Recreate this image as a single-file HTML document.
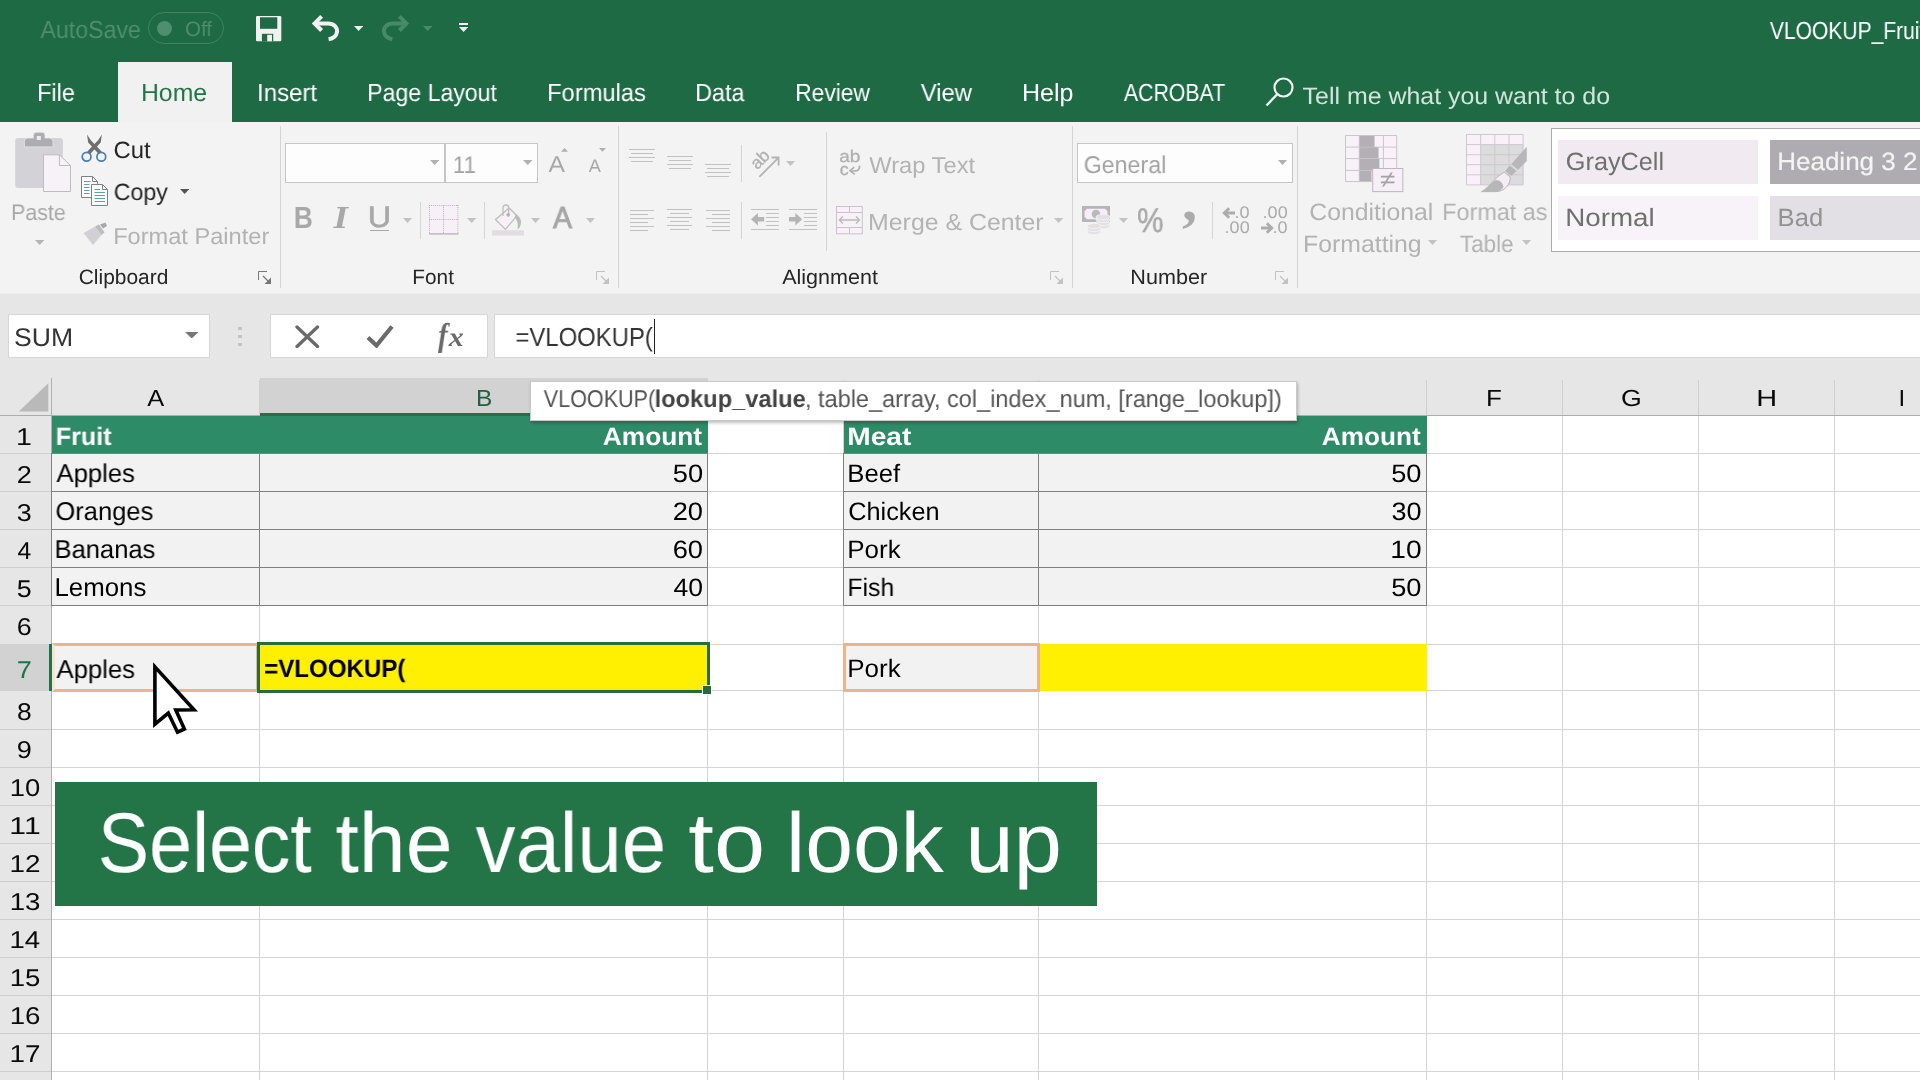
<!DOCTYPE html>
<html lang="en"><head><meta charset="utf-8"><title>VLOOKUP_Fruit - Excel</title>
<style>
html,body{margin:0;padding:0;}
body{width:1920px;height:1080px;overflow:hidden;position:relative;background:#fff;font-family:'Liberation Sans',sans-serif;}
.b{position:absolute;display:block;}
.t{position:absolute;white-space:pre;line-height:1em;transform-origin:0 0;will-change:transform;text-rendering:geometricPrecision;}
</style></head><body>
<div class="b" style="left:0.00px;top:0.00px;width:1920.00px;height:122.00px;background:#1d6a45;"></div>
<div class="b" style="left:0.00px;top:122.00px;width:1920.00px;height:171.00px;background:#f3f3f3;"></div>
<div class="b" style="left:0.00px;top:293.00px;width:1920.00px;height:85.00px;background:#e6e6e6;"></div>
<div class="b" style="left:0.00px;top:293.00px;width:1920.00px;height:1.00px;background:#ededed;"></div>
<header id="titlebar">
<span class="t" style="left:40px;top:19px;font-size:24.75px;color:#4f8e6e;transform:translateX(0.47px) scaleX(0.9350);">AutoSave</span>
<div class="b" style="left:148.00px;top:12.00px;width:76.00px;height:32.00px;border:1.3px solid #3f8461;box-sizing:border-box;border-radius:16px;"></div>
<div class="b" style="left:156.50px;top:20.50px;width:15.00px;height:15.00px;background:#4f8e6e;border-radius:50%;"></div>
<span class="t" style="left:185px;top:20px;font-size:20.75px;color:#4f8e6e;transform:translateX(0.04px) scaleX(0.9839);">Off</span>
<svg class="b" style="left:255.00px;top:15.00px;" width="28.00" height="28.00" viewBox="0 0 28.00 28.00"><rect x="1" y="1" width="25.3" height="25.3" rx="1.2" fill="#f1f1f1"/><rect x="5" y="2.3" width="17.3" height="11.5" fill="#1d6a45"/><rect x="6.9" y="18.8" width="11.3" height="7.5" fill="#1d6a45"/><rect x="12.2" y="19.8" width="4.8" height="6.5" fill="#f1f1f1"/></svg>
<svg class="b" style="left:308.00px;top:11.00px;" width="36.00" height="34.00" viewBox="0 0 36.00 34.00"><path d="M13.6,5.3 L6.6,12.4 L13.6,19.5" fill="none" stroke="#f1f1f1" stroke-width="4"/><path d="M7,12.4 H20 C26,12.4 29.8,16.6 28.9,21.4 C28.2,25.0 25.0,27.6 20.6,28.3" fill="none" stroke="#f1f1f1" stroke-width="4"/></svg>
<svg class="b" style="left:354.00px;top:26.30px;" width="9.20" height="5.00" viewBox="0 0 9.20 5.00"><polygon points="0,0 9.20,0 4.60,5.00" fill="#f1f1f1"/></svg>
<svg class="b" style="left:377.00px;top:11.00px;" width="36.00" height="34.00" viewBox="0 0 36.00 34.00"><path d="M22.4,5.3 L29.4,12.4 L22.4,19.5" fill="none" stroke="#468a67" stroke-width="4"/><path d="M29,12.4 H16 C10,12.4 6.2,16.6 7.1,21.4 C7.8,25.0 11.0,27.6 15.4,28.3" fill="none" stroke="#468a67" stroke-width="4"/></svg>
<svg class="b" style="left:423.00px;top:26.30px;" width="9.20" height="5.00" viewBox="0 0 9.20 5.00"><polygon points="0,0 9.20,0 4.60,5.00" fill="#4b8d6b"/></svg>
<div class="b" style="left:459.00px;top:23.00px;width:9.20px;height:1.80px;background:#f1f1f1;"></div>
<svg class="b" style="left:459.00px;top:27.00px;" width="9.20" height="5.00" viewBox="0 0 9.20 5.00"><polygon points="0,0 9.20,0 4.60,5.00" fill="#f1f1f1"/></svg>
<span class="t" style="left:1769px;top:20px;font-size:24.75px;color:#fff;transform:translateX(0.86px) scaleX(0.8499);">VLOOKUP_Fruit</span>
</header>
<nav id="ribbon-tabs">
<div class="b" style="left:118.00px;top:62.00px;width:114.00px;height:61.00px;background:#f1f1f1;"></div>
<span class="t" style="left:37px;top:82px;font-size:24.75px;color:#fff;transform:translateX(0.16px) scaleX(0.9496);">File</span>
<span class="t" style="left:141px;top:82px;font-size:24.75px;color:#217346;transform:translateX(0.07px) scaleX(0.9987);">Home</span>
<span class="t" style="left:256px;top:82px;font-size:24.75px;color:#fff;transform:translateX(1.00px) scaleX(0.9702);">Insert</span>
<span class="t" style="left:367px;top:82px;font-size:24.75px;color:#fff;transform:translateX(0.19px) scaleX(0.9339);">Page Layout</span>
<span class="t" style="left:547px;top:82px;font-size:24.75px;color:#fff;transform:translateX(0.15px) scaleX(0.9567);">Formulas</span>
<span class="t" style="left:695px;top:82px;font-size:24.75px;color:#fff;transform:translateX(0.18px) scaleX(0.9423);">Data</span>
<span class="t" style="left:795px;top:82px;font-size:24.75px;color:#fff;transform:translateX(0.22px) scaleX(0.9205);">Review</span>
<span class="t" style="left:920px;top:82px;font-size:24.75px;color:#fff;transform:translateX(0.83px) scaleX(0.9615);">View</span>
<span class="t" style="left:1022px;top:82px;font-size:24.75px;color:#fff;transform:translateX(0.04px) scaleX(1.0113);">Help</span>
<span class="t" style="left:1123px;top:82px;font-size:24.75px;color:#fff;transform:translateX(0.89px) scaleX(0.8595);">ACROBAT</span>
<svg class="b" style="left:1264.00px;top:76.00px;" width="33.00" height="32.00" viewBox="0 0 33.00 32.00"><circle cx="19.5" cy="11.5" r="9" fill="none" stroke="#eef5f1" stroke-width="2.2"/><path d="M13,18.5 L2.5,29.5" stroke="#eef5f1" stroke-width="2.4"/></svg>
<span class="t" style="left:1302px;top:85px;font-size:23.75px;color:#d3e5db;transform:translateX(0.61px) scaleX(1.0489);">Tell me what you want to do</span>
</nav>
<section id="ribbon">
<div class="b" style="left:280.00px;top:126.00px;width:1.00px;height:162.00px;background:#d4d4d4;"></div>
<div class="b" style="left:618.00px;top:126.00px;width:1.00px;height:162.00px;background:#d4d4d4;"></div>
<div class="b" style="left:1072.00px;top:126.00px;width:1.00px;height:162.00px;background:#d4d4d4;"></div>
<div class="b" style="left:1297.00px;top:126.00px;width:1.00px;height:162.00px;background:#d4d4d4;"></div>
<span class="t" style="left:78px;top:268px;font-size:20.75px;color:#262626;transform:translateX(0.75px) scaleX(1.0086);">Clipboard</span>
<span class="t" style="left:412px;top:268px;font-size:20.75px;color:#262626;transform:translateX(0.37px) scaleX(1.0010);">Font</span>
<span class="t" style="left:782px;top:268px;font-size:20.75px;color:#262626;transform:translateX(0.19px) scaleX(1.0376);">Alignment</span>
<span class="t" style="left:1130px;top:268px;font-size:20.75px;color:#262626;transform:translateX(0.31px) scaleX(1.0405);">Number</span>
<svg class="b" style="left:257.50px;top:271.00px;" width="13.50" height="13.50" viewBox="0 0 13.50 13.50"><path d="M0.5,9V0.5H9" fill="none" stroke="#777" stroke-width="1"/><path d="M5,5L11,11" stroke="#777" stroke-width="1.3"/><polygon points="13,6.5 13,13 6.5,13" fill="#777"/></svg>
<svg class="b" style="left:596.00px;top:271.00px;" width="13.50" height="13.50" viewBox="0 0 13.50 13.50"><path d="M0.5,9V0.5H9" fill="none" stroke="#c2c2c2" stroke-width="1"/><path d="M5,5L11,11" stroke="#c2c2c2" stroke-width="1.3"/><polygon points="13,6.5 13,13 6.5,13" fill="#c2c2c2"/></svg>
<svg class="b" style="left:1050.00px;top:271.00px;" width="13.50" height="13.50" viewBox="0 0 13.50 13.50"><path d="M0.5,9V0.5H9" fill="none" stroke="#c2c2c2" stroke-width="1"/><path d="M5,5L11,11" stroke="#c2c2c2" stroke-width="1.3"/><polygon points="13,6.5 13,13 6.5,13" fill="#c2c2c2"/></svg>
<svg class="b" style="left:1275.00px;top:271.00px;" width="13.50" height="13.50" viewBox="0 0 13.50 13.50"><path d="M0.5,9V0.5H9" fill="none" stroke="#c2c2c2" stroke-width="1"/><path d="M5,5L11,11" stroke="#c2c2c2" stroke-width="1.3"/><polygon points="13,6.5 13,13 6.5,13" fill="#c2c2c2"/></svg>
<svg class="b" style="left:14.00px;top:131.00px;" width="59.00" height="63.00" viewBox="0 0 59.00 63.00"><rect x="1.2" y="7.1" width="47.7" height="50" rx="3" fill="#d3d2d6"/><path d="M10.4,15.9 V10.5 A3.5,3.5 0 0 1 13.9,7 H19.4 V4.2 A3,3 0 0 1 22.4,1.2 H28 A3,3 0 0 1 31,4.2 V7 H35.5 A3.5,3.5 0 0 1 39,10.5 V15.9 Z" fill="#adacb0" stroke="#e9e8eb" stroke-width="0.8"/><rect x="22.8" y="5" width="4.1" height="4" fill="#eceaee"/><path d="M29.5,23.8 H45.4 L56.5,34.5 V60.5 H29.5 Z" fill="#f7f1f8" stroke="#bdbbbf" stroke-width="1"/><path d="M45.4,23.8 V34.5 H56.5" fill="none" stroke="#bdbbbf" stroke-width="1"/></svg>
<span class="t" style="left:11px;top:202px;font-size:22.50px;color:#a8a8a8;transform:translateX(0.09px) scaleX(0.9495);">Paste</span>
<svg class="b" style="left:34.70px;top:239.70px;" width="9.30" height="5.00" viewBox="0 0 9.30 5.00"><polygon points="0,0 9.30,0 4.65,5.00" fill="#b4b4b4"/></svg>
<svg class="b" style="left:80.00px;top:133.00px;" width="29.00" height="31.00" viewBox="0 0 29.00 31.00"><polygon points="7.0,1.6 10.8,7.2 21.6,18.6 18.9,21.3 8.2,9.6" fill="#6f6f6f"/><polygon points="21.9,1.6 18.1,7.2 7.3,18.6 10.0,21.3 20.7,9.6" fill="#6f6f6f"/><circle cx="6.6" cy="23.8" r="4.4" fill="none" stroke="#4a7eb3" stroke-width="1.7"/><circle cx="21.3" cy="23.8" r="4.4" fill="none" stroke="#4a7eb3" stroke-width="1.7"/></svg>
<span class="t" style="left:113px;top:139px;font-size:23.50px;color:#262626;transform:translateX(0.58px) scaleX(1.0155);">Cut</span>
<svg class="b" style="left:81.00px;top:176.00px;" width="28.00" height="31.00" viewBox="0 0 28.00 31.00"><g fill="#fff" stroke="#808080" stroke-width="1"><path d="M0.5,0.5H11.5L16.5,5.5V21.5H0.5Z"/><path d="M11.5,0.5V5.5H16.5" fill="none"/><path d="M10.5,8.5H21.5L26.5,13.5V29.5H10.5Z"/><path d="M21.5,8.5V13.5H26.5" fill="none"/></g><g stroke="#4d93a6" stroke-width="0.9"><path d="M3,5.5H9.5M3,8.5H8.5M3,11.5H8.5M3,14.5H8.5M3,17.5H8.5"/><path d="M13.5,13.5H19M13.5,16.5H24M13.5,19.5H24M13.5,22.5H24M13.5,25.5H24"/></g></svg>
<span class="t" style="left:113px;top:181px;font-size:23.50px;color:#262626;transform:translateX(0.64px) scaleX(0.9895);">Copy</span>
<svg class="b" style="left:179.70px;top:189.00px;" width="9.30" height="5.00" viewBox="0 0 9.30 5.00"><polygon points="0,0 9.30,0 4.65,5.00" fill="#555"/></svg>
<svg class="b" style="left:83.00px;top:222.00px;" width="25.00" height="24.00" viewBox="0 0 25.00 24.00"><path d="M0.5,11 L12,4.5 L18.5,13 L10,23 Z" fill="#d2d0d4"/><path d="M12,4.5 L16,2.5 L21.5,10.5 L18.5,13Z" fill="#bcbcbc"/><path d="M17,2.5 L22.5,0.5 L24,4 L20,6.5Z" fill="#a9a9a9"/></svg>
<span class="t" style="left:113px;top:225px;font-size:23.00px;color:#b2b2b2;transform:translateX(0.16px) scaleX(1.0261);">Format Painter</span>
<div class="b" style="left:285.00px;top:143.00px;width:160.00px;height:40.00px;background:#fdfdfd;border:1px solid #c6c6c6;box-sizing:border-box;"></div>
<div class="b" style="left:445.00px;top:143.00px;width:93.00px;height:40.00px;background:#fdfdfd;border:1px solid #c6c6c6;box-sizing:border-box;"></div>
<svg class="b" style="left:429.70px;top:160.00px;" width="9.30" height="5.00" viewBox="0 0 9.30 5.00"><polygon points="0,0 9.30,0 4.65,5.00" fill="#b0b0b0"/></svg>
<svg class="b" style="left:522.50px;top:160.00px;" width="9.50" height="5.00" viewBox="0 0 9.50 5.00"><polygon points="0,0 9.50,0 4.75,5.00" fill="#b0b0b0"/></svg>
<span class="t" style="left:452px;top:154px;font-size:24.00px;color:#a2a2a2;transform:translateX(0.83px) scaleX(0.9302);">11</span>
<span class="t" style="left:548px;top:153px;font-size:23.00px;color:#a8a8a8;transform:translateX(0.42px) scaleX(1.0746);">A</span>
<svg class="b" style="left:561.00px;top:148.00px;" width="7.00" height="3.70" viewBox="0 0 7.00 3.70"><polygon points="0,3.70 7.00,3.70 3.50,0" fill="#b0b0b0"/></svg>
<span class="t" style="left:588px;top:157px;font-size:18.00px;color:#a8a8a8;transform:translateX(0.86px) scaleX(1.0119);">A</span>
<svg class="b" style="left:599.00px;top:148.00px;" width="7.00" height="3.70" viewBox="0 0 7.00 3.70"><polygon points="0,0 7.00,0 3.50,3.70" fill="#b0b0b0"/></svg>
<span class="t" style="left:293px;top:203px;font-size:30.50px;color:#a8a8a8;font-weight:700;transform:translateX(0.78px) scaleX(0.8637);">B</span>
<span class="t" style="left:333px;top:201px;font-size:32.00px;color:#a8a8a8;font-weight:700;font-style:italic;font-family:'Liberation Serif', serif;transform:translateX(0.44px) scaleX(1.1653);">I</span>
<span class="t" style="left:367px;top:203px;font-size:29.75px;color:#a8a8a8;transform:translateX(0.70px) scaleX(1.0901);-webkit-text-stroke:0.6px #a8a8a8;">U</span>
<div class="b" style="left:370.00px;top:229.60px;width:19.00px;height:1.40px;background:#a8a8a8;"></div>
<svg class="b" style="left:403.00px;top:218.00px;" width="9.00" height="5.00" viewBox="0 0 9.00 5.00"><polygon points="0,0 9.00,0 4.50,5.00" fill="#c2c2c2"/></svg>
<div class="b" style="left:420.00px;top:202.00px;width:1.00px;height:36.70px;background:#d4d4d4;"></div>
<svg class="b" style="left:429.00px;top:205.00px;" width="30.00" height="30.00" viewBox="0 0 30.00 30.00"><rect x="0.5" y="0.5" width="28.5" height="28.5" fill="#f7f0f7"/><path d="M0,0.5H29.5M0,14.5H29.5" stroke="#bdadbe" stroke-width="1" stroke-dasharray="1 1.07" fill="none"/><path d="M0.5,0V29M14.5,0V29M28.9,0V29" stroke="#bdadbe" stroke-width="1" stroke-dasharray="1 1.07" fill="none"/><path d="M0,28.9H29.5" stroke="#b7afb9" stroke-width="1.3"/></svg>
<svg class="b" style="left:466.70px;top:218.00px;" width="9.30" height="5.00" viewBox="0 0 9.30 5.00"><polygon points="0,0 9.30,0 4.65,5.00" fill="#c2c2c2"/></svg>
<div class="b" style="left:484.00px;top:202.00px;width:1.00px;height:36.70px;background:#d4d4d4;"></div>
<svg class="b" style="left:492.00px;top:203.00px;" width="33.00" height="33.00" viewBox="0 0 33.00 33.00"><path d="M3.5,16.5 L17.1,5.0 L24.9,12.8 L13.4,26.4 Z" fill="#f7f0f7" stroke="#bdbdbd" stroke-width="1.3" stroke-linejoin="round"/><path d="M11,13 V4.8 A2.8,2.8 0 0 1 16.6,4.8 V11" fill="none" stroke="#bdbdbd" stroke-width="1.3"/><circle cx="16.2" cy="11.8" r="1.9" fill="#b3b3b3"/><path d="M23.8,11.2 C28,13 30,18 28.6,22 C28,24 27,25.6 25.6,26.6 C26.2,21 25.6,17.5 22.6,14.2 Z" fill="#bbbbbb"/><rect x="0" y="27.2" width="32" height="5.4" fill="#e1dee3"/></svg>
<svg class="b" style="left:531.00px;top:218.00px;" width="9.00" height="5.00" viewBox="0 0 9.00 5.00"><polygon points="0,0 9.00,0 4.50,5.00" fill="#c2c2c2"/></svg>
<span class="t" style="left:552px;top:203px;font-size:30.50px;color:#a6a6a6;transform:translateX(0.99px) scaleX(0.9365);-webkit-text-stroke:0.9px #a6a6a6;">A</span>
<svg class="b" style="left:586.00px;top:218.00px;" width="9.00" height="5.00" viewBox="0 0 9.00 5.00"><polygon points="0,0 9.00,0 4.50,5.00" fill="#c2c2c2"/></svg>
<div class="b" style="left:629.00px;top:149.00px;width:26.00px;height:1.00px;background:#c2c2c2;"></div><div class="b" style="left:631.00px;top:153.00px;width:22.00px;height:1.00px;background:#c2c2c2;"></div><div class="b" style="left:629.00px;top:157.00px;width:26.00px;height:1.00px;background:#c2c2c2;"></div><div class="b" style="left:631.00px;top:161.00px;width:22.00px;height:1.00px;background:#c2c2c2;"></div>
<div class="b" style="left:667.00px;top:156.00px;width:26.00px;height:1.00px;background:#c2c2c2;"></div><div class="b" style="left:669.00px;top:160.00px;width:22.00px;height:1.00px;background:#c2c2c2;"></div><div class="b" style="left:667.00px;top:164.00px;width:26.00px;height:1.00px;background:#c2c2c2;"></div><div class="b" style="left:669.00px;top:168.00px;width:22.00px;height:1.00px;background:#c2c2c2;"></div>
<div class="b" style="left:705.00px;top:164.00px;width:26.00px;height:1.00px;background:#c2c2c2;"></div><div class="b" style="left:707.00px;top:168.00px;width:22.00px;height:1.00px;background:#c2c2c2;"></div><div class="b" style="left:705.00px;top:172.00px;width:26.00px;height:1.00px;background:#c2c2c2;"></div><div class="b" style="left:707.00px;top:176.00px;width:22.00px;height:1.00px;background:#c2c2c2;"></div>
<div class="b" style="left:741.00px;top:145.00px;width:1.00px;height:36.70px;background:#d4d4d4;"></div>
<div class="b" style="left:630.00px;top:210.00px;width:24.00px;height:1.00px;background:#c2c2c2;"></div><div class="b" style="left:630.00px;top:214.00px;width:18.00px;height:1.00px;background:#c2c2c2;"></div><div class="b" style="left:630.00px;top:218.00px;width:24.00px;height:1.00px;background:#c2c2c2;"></div><div class="b" style="left:630.00px;top:222.00px;width:18.00px;height:1.00px;background:#c2c2c2;"></div><div class="b" style="left:630.00px;top:226.00px;width:24.00px;height:1.00px;background:#c2c2c2;"></div><div class="b" style="left:630.00px;top:230.00px;width:18.00px;height:1.00px;background:#c2c2c2;"></div>
<div class="b" style="left:667.00px;top:209.00px;width:25.00px;height:1.00px;background:#c2c2c2;"></div><div class="b" style="left:670.00px;top:213.00px;width:19.00px;height:1.00px;background:#c2c2c2;"></div><div class="b" style="left:667.00px;top:217.00px;width:25.00px;height:1.00px;background:#c2c2c2;"></div><div class="b" style="left:670.00px;top:221.00px;width:19.00px;height:1.00px;background:#c2c2c2;"></div><div class="b" style="left:667.00px;top:225.00px;width:25.00px;height:1.00px;background:#c2c2c2;"></div><div class="b" style="left:670.00px;top:229.00px;width:19.00px;height:1.00px;background:#c2c2c2;"></div>
<div class="b" style="left:706.00px;top:210.00px;width:24.00px;height:1.00px;background:#c2c2c2;"></div><div class="b" style="left:712.00px;top:214.00px;width:18.00px;height:1.00px;background:#c2c2c2;"></div><div class="b" style="left:706.00px;top:218.00px;width:24.00px;height:1.00px;background:#c2c2c2;"></div><div class="b" style="left:712.00px;top:222.00px;width:18.00px;height:1.00px;background:#c2c2c2;"></div><div class="b" style="left:706.00px;top:226.00px;width:24.00px;height:1.00px;background:#c2c2c2;"></div><div class="b" style="left:712.00px;top:230.00px;width:18.00px;height:1.00px;background:#c2c2c2;"></div>
<div class="b" style="left:741.00px;top:202.00px;width:1.00px;height:36.70px;background:#d4d4d4;"></div>
<svg class="b" style="left:750.00px;top:148.00px;" width="32.00" height="32.00" viewBox="0 0 32.00 32.00"><path d="M9.3,28.8 L28.3,9.8 M21.5,9.5 H28.6 V17.5" fill="none" stroke="#b3b3b3" stroke-width="1.8"/><text x="0" y="0" transform="translate(7.2,22.3) rotate(-45)" font-family="Liberation Sans, sans-serif" font-size="17.5" fill="#b0b0b0" stroke="#b0b0b0" stroke-width="0.3">ab</text></svg>
<svg class="b" style="left:786.00px;top:161.00px;" width="9.00" height="5.00" viewBox="0 0 9.00 5.00"><polygon points="0,0 9.00,0 4.50,5.00" fill="#c2c2c2"/></svg>
<div class="b" style="left:751.00px;top:209.00px;width:28.00px;height:1.00px;background:#c2c2c2;"></div><div class="b" style="left:751.00px;top:229.00px;width:28.00px;height:1.00px;background:#c2c2c2;"></div><div class="b" style="left:766.00px;top:213.00px;width:13.00px;height:1.00px;background:#c2c2c2;"></div><div class="b" style="left:766.00px;top:217.00px;width:13.00px;height:1.00px;background:#c2c2c2;"></div><div class="b" style="left:766.00px;top:221.00px;width:13.00px;height:1.00px;background:#c2c2c2;"></div><div class="b" style="left:766.00px;top:225.00px;width:13.00px;height:1.00px;background:#c2c2c2;"></div><svg class="b" style="left:751.00px;top:212.00px;" width="14.00" height="15.00" viewBox="0 0 14.00 15.00"><path d="M13.2,5H6.9V1L0,7.3L6.9,13.6V9.6H13.2Z" fill="#b5b5b5"/></svg>
<div class="b" style="left:789.00px;top:209.00px;width:28.00px;height:1.00px;background:#c2c2c2;"></div><div class="b" style="left:789.00px;top:229.00px;width:28.00px;height:1.00px;background:#c2c2c2;"></div><div class="b" style="left:804.00px;top:213.00px;width:13.00px;height:1.00px;background:#c2c2c2;"></div><div class="b" style="left:804.00px;top:217.00px;width:13.00px;height:1.00px;background:#c2c2c2;"></div><div class="b" style="left:804.00px;top:221.00px;width:13.00px;height:1.00px;background:#c2c2c2;"></div><div class="b" style="left:804.00px;top:225.00px;width:13.00px;height:1.00px;background:#c2c2c2;"></div><svg class="b" style="left:789.00px;top:212.00px;" width="14.00" height="15.00" viewBox="0 0 14.00 15.00"><path d="M0,5H6.3V1L13.2,7.3L6.3,13.6V9.6H0Z" fill="#b5b5b5"/></svg>
<div class="b" style="left:826.00px;top:132.00px;width:1.00px;height:119.00px;background:#d4d4d4;"></div>
<span class="t" style="left:839px;top:148px;font-size:17.00px;color:#b0b0b0;transform:translateX(0.25px) scaleX(1.1222);-webkit-text-stroke:0.3px #b0b0b0;">ab</span>
<span class="t" style="left:839px;top:161px;font-size:17.00px;color:#b0b0b0;transform:translateX(0.84px) scaleX(1.0484);-webkit-text-stroke:0.3px #b0b0b0;">c</span>
<svg class="b" style="left:848.00px;top:163.00px;" width="14.00" height="14.00" viewBox="0 0 14.00 14.00"><path d="M11.5,2.5 C12,8 8.5,8.3 2.5,7.8 M6.3,4.2 L2,7.8 L6.8,11.3" fill="none" stroke="#b0b0b0" stroke-width="1.6"/></svg>
<span class="t" style="left:869px;top:154px;font-size:23.00px;color:#b3b3b3;transform:translateX(0.25px) scaleX(1.0304);">Wrap Text</span>
<svg class="b" style="left:836.00px;top:206.00px;" width="27.50" height="28.50" viewBox="0 0 27.50 28.50"><rect x="0.5" y="0.5" width="25.8" height="27.3" fill="#f8f1f8" stroke="#c9c2ca"/><path d="M0.5,6.5H26.3M0.5,21.5H26.3M13.5,0.5V6.5M13.5,21.5V27.8" stroke="#c9c2ca" fill="none"/><path d="M3.3,14H23.5M6.8,10.5L3.3,14L6.8,17.5M20,10.5L23.5,14L20,17.5" stroke="#b9b9b9" stroke-width="1.3" fill="none"/></svg>
<span class="t" style="left:868px;top:211px;font-size:23.25px;color:#b3b3b3;transform:translateX(0.06px) scaleX(1.0694);">Merge &amp; Center</span>
<svg class="b" style="left:1053.80px;top:218.00px;" width="9.20" height="5.00" viewBox="0 0 9.20 5.00"><polygon points="0,0 9.20,0 4.60,5.00" fill="#c2c2c2"/></svg>
<div class="b" style="left:1077.00px;top:143.00px;width:216.00px;height:40.00px;background:#fdfdfd;border:1px solid #c6c6c6;box-sizing:border-box;"></div>
<span class="t" style="left:1083px;top:154px;font-size:24.25px;color:#a2a2a2;transform:translateX(0.69px) scaleX(0.9572);">General</span>
<svg class="b" style="left:1278.00px;top:160.00px;" width="9.00" height="5.00" viewBox="0 0 9.00 5.00"><polygon points="0,0 9.00,0 4.50,5.00" fill="#b0b0b0"/></svg>
<svg class="b" style="left:1082.00px;top:206.00px;" width="29.00" height="29.00" viewBox="0 0 29.00 29.00"><rect x="0" y="0" width="28" height="16" fill="#b5b4b7"/><path d="M4.5,2.8 H23.5 A2,2 0 0 0 25.5,4.8 V11.2 A2,2 0 0 0 23.5,13.2 H4.5 A2,2 0 0 0 2.5,11.2 V4.8 A2,2 0 0 0 4.5,2.8Z" fill="#f6eef7"/><circle cx="14" cy="8" r="4.3" fill="#b9b9b9"/><g fill="#e4e1e6" stroke="#f3f3f3" stroke-width="0.8"><ellipse cx="21" cy="20" rx="7" ry="2.6"/><ellipse cx="21" cy="17" rx="7" ry="2.6"/><ellipse cx="21" cy="14" rx="7" ry="2.6"/><ellipse cx="21" cy="11" rx="7" ry="2.6"/><ellipse cx="12" cy="26" rx="7" ry="2.6"/><ellipse cx="12" cy="23" rx="7" ry="2.6"/><ellipse cx="12" cy="20" rx="7" ry="2.6"/></g></svg>
<svg class="b" style="left:1119.00px;top:218.00px;" width="9.00" height="5.00" viewBox="0 0 9.00 5.00"><polygon points="0,0 9.00,0 4.50,5.00" fill="#c2c2c2"/></svg>
<span class="t" style="left:1137px;top:204px;font-size:34.25px;color:#a9a9a9;transform:translateX(0.10px) scaleX(0.8647);-webkit-text-stroke:0.6px #a9a9a9;">%</span>
<span class="t" style="left:1181px;top:172px;font-size:58.00px;color:#ababab;font-weight:700;font-family:'Liberation Serif', serif;transform:translateX(0.98px) scaleX(1.0396);">,</span>
<div class="b" style="left:1212.00px;top:202.00px;width:1.00px;height:36.70px;background:#d4d4d4;"></div>
<span class="t" style="left:1234px;top:205px;font-size:16.75px;color:#ababab;transform:translateX(0.59px) scaleX(1.0800);">.0</span>
<span class="t" style="left:1224px;top:220px;font-size:16.75px;color:#ababab;transform:translateX(0.59px) scaleX(1.0769);">.00</span>
<svg class="b" style="left:1222.00px;top:207.00px;" width="14.00" height="12.00" viewBox="0 0 14.00 12.00"><path d="M13,6H3M7.2,1.2L2.2,6L7.2,10.8" fill="none" stroke="#acacac" stroke-width="2.8"/></svg>
<span class="t" style="left:1262px;top:205px;font-size:16.75px;color:#ababab;transform:translateX(0.59px) scaleX(1.0769);">.00</span>
<span class="t" style="left:1272px;top:220px;font-size:16.75px;color:#ababab;transform:translateX(0.59px) scaleX(1.0800);">.0</span>
<svg class="b" style="left:1260.00px;top:222.00px;" width="14.00" height="12.00" viewBox="0 0 14.00 12.00"><path d="M1,6H11M6.8,1.2L11.8,6L6.8,10.8" fill="none" stroke="#acacac" stroke-width="2.8"/></svg>
<svg class="b" style="left:1345.00px;top:135.00px;" width="59.00" height="57.50" viewBox="0 0 59.00 57.50"><rect x="0.5" y="0.5" width="51.2" height="46.1" fill="#f8f1f8"/><rect x="14.3" y="0.5" width="15.0" height="11.6" fill="#b2b0b4"/><rect x="14.3" y="12.1" width="19.0" height="11.5" fill="#b2b0b4"/><rect x="14.3" y="23.6" width="19.9" height="11.8" fill="#b2b0b4"/><rect x="14.3" y="35.4" width="12.0" height="11.2" fill="#b2b0b4"/><path d="M0.5,0.5V46.6" stroke="#cbc4cd" stroke-width="1"/><path d="M14.3,0.5V46.6" stroke="#cbc4cd" stroke-width="1"/><path d="M38.4,0.5V46.6" stroke="#cbc4cd" stroke-width="1"/><path d="M51.7,0.5V46.6" stroke="#cbc4cd" stroke-width="1"/><path d="M0.5,0.5H51.7" stroke="#cbc4cd" stroke-width="1"/><path d="M0.5,12.1H51.7" stroke="#cbc4cd" stroke-width="1"/><path d="M0.5,23.6H51.7" stroke="#cbc4cd" stroke-width="1"/><path d="M0.5,35.4H51.7" stroke="#cbc4cd" stroke-width="1"/><path d="M0.5,46.6H51.7" stroke="#cbc4cd" stroke-width="1"/><rect x="14.8" y="1.1" width="14.5" height="10.4" fill="#b2b0b4"/><rect x="14.8" y="12.7" width="18.5" height="10.3" fill="#b2b0b4"/><rect x="14.8" y="24.2" width="19.4" height="10.6" fill="#b2b0b4"/><rect x="14.8" y="36.0" width="11.5" height="10.0" fill="#b2b0b4"/><rect x="27.7" y="33.5" width="30.2" height="23.1" fill="#f6eff7" stroke="#bbb9bd" stroke-width="1"/></svg>
<span class="t" style="left:1380px;top:168px;font-size:23.00px;color:#a3a3a3;transform:translateX(0.10px) scaleX(1.2143);">≠</span>
<span class="t" style="left:1309px;top:201px;font-size:23.75px;color:#b2b2b2;transform:translateX(0.34px) scaleX(1.0425);">Conditional</span>
<span class="t" style="left:1303px;top:233px;font-size:23.75px;color:#b2b2b2;transform:translateX(0.06px) scaleX(1.0447);">Formatting</span>
<svg class="b" style="left:1428.00px;top:239.50px;" width="9.00" height="5.00" viewBox="0 0 9.00 5.00"><polygon points="0,0 9.00,0 4.50,5.00" fill="#c2c2c2"/></svg>
<svg class="b" style="left:1466.00px;top:134.00px;" width="62.00" height="58.50" viewBox="0 0 62.00 58.50"><rect x="0.5" y="0.5" width="56.6" height="50.4" fill="#f8f2f8"/><rect x="14.7" y="10.6" width="42.5" height="40.3" fill="#dcdbdd"/><path d="M0.5,0.5V50.9" stroke="#cdc8cf" stroke-width="1"/><path d="M14.7,0.5V50.9" stroke="#cdc8cf" stroke-width="1"/><path d="M28.8,0.5V50.9" stroke="#cdc8cf" stroke-width="1"/><path d="M43.0,0.5V50.9" stroke="#cdc8cf" stroke-width="1"/><path d="M57.1,0.5V50.9" stroke="#cdc8cf" stroke-width="1"/><path d="M0.5,0.5H57.1" stroke="#cdc8cf" stroke-width="1"/><path d="M0.5,10.6H57.1" stroke="#cdc8cf" stroke-width="1"/><path d="M0.5,20.7H57.1" stroke="#cdc8cf" stroke-width="1"/><path d="M0.5,30.7H57.1" stroke="#cdc8cf" stroke-width="1"/><path d="M0.5,40.8H57.1" stroke="#cdc8cf" stroke-width="1"/><path d="M0.5,50.9H57.1" stroke="#cdc8cf" stroke-width="1"/><path d="M60.8,12.7 V26.9 L52,35.7 L45.2,30.3 Z" fill="#b7b6b9"/><path d="M43.9,31.6 L50.7,37 L45.2,41.8 L39.1,37 Z" fill="#b7b6b9"/><path d="M38.2,38.2 L44.3,43 C44.5,51 38,57.6 30,57.6 L15.5,57.6 C24,53 28,44 38.2,38.2 Z" fill="#f3eef4" stroke="#b7b6b9" stroke-width="1"/><path d="M15.5,57.6 C22,54 25,48.5 29,46.5 C33,45.5 36.5,48 37.5,53 C35.5,56 33,57.6 30,57.6 Z" fill="#b7b6b9"/></svg>
<span class="t" style="left:1442px;top:201px;font-size:23.75px;color:#b2b2b2;transform:translateX(0.17px) scaleX(0.9847);">Format as</span>
<span class="t" style="left:1459px;top:233px;font-size:23.75px;color:#b2b2b2;transform:translateX(0.81px) scaleX(0.9482);">Table</span>
<svg class="b" style="left:1521.70px;top:239.50px;" width="9.00" height="5.00" viewBox="0 0 9.00 5.00"><polygon points="0,0 9.00,0 4.50,5.00" fill="#c2c2c2"/></svg>
<div class="b" style="left:1551.00px;top:128.00px;width:379.00px;height:124.00px;background:#fff;border:1px solid #ababab;box-sizing:border-box;"></div>
<div class="b" style="left:1558.00px;top:140.00px;width:200.00px;height:43.50px;background:#f1ebf1;"></div>
<div class="b" style="left:1770.00px;top:140.00px;width:150.00px;height:43.50px;background:#aeacb0;"></div>
<div class="b" style="left:1558.00px;top:196.00px;width:200.00px;height:43.50px;background:#f8f2f9;"></div>
<div class="b" style="left:1770.00px;top:196.00px;width:150.00px;height:43.50px;background:#e3e0e5;"></div>
<span class="t" style="left:1565px;top:150px;font-size:25.00px;color:#707070;transform:translateX(0.82px) scaleX(1.0107);">GrayCell</span>
<span class="t" style="left:1777px;top:150px;font-size:25.00px;color:#f4f4f4;transform:translateX(0.15px) scaleX(1.0409);-webkit-text-stroke:0.2px #f4f4f4;">Heading 3 2</span>
<span class="t" style="left:1565px;top:206px;font-size:25.00px;color:#707070;transform:translateX(0.16px) scaleX(1.1103);">Normal</span>
<span class="t" style="left:1777px;top:206px;font-size:25.00px;color:#929292;transform:translateX(0.61px) scaleX(1.0241);">Bad</span>
</section>
<section id="formula-bar">
<div class="b" style="left:8.00px;top:314.00px;width:202.00px;height:44.00px;background:#fff;border:1px solid #d6d6d6;box-sizing:border-box;"></div>
<span class="t" style="left:13px;top:326px;font-size:25.50px;color:#333;transform:translateX(0.95px) scaleX(1.0424);">SUM</span>
<svg class="b" style="left:184.50px;top:331.50px;" width="13.50" height="6.50" viewBox="0 0 13.50 6.50"><polygon points="0,0 13.50,0 6.75,6.50" fill="#777"/></svg>
<div class="b" style="left:238.00px;top:326.50px;width:4.00px;height:3.00px;background:#c4c4c4;"></div>
<div class="b" style="left:238.00px;top:334.50px;width:4.00px;height:3.00px;background:#c4c4c4;"></div>
<div class="b" style="left:238.00px;top:342.50px;width:4.00px;height:3.00px;background:#c4c4c4;"></div>
<div class="b" style="left:270.00px;top:314.00px;width:218.00px;height:44.00px;background:#fff;border:1px solid #d6d6d6;box-sizing:border-box;"></div>
<svg class="b" style="left:295.00px;top:325.00px;" width="25.00" height="23.00" viewBox="0 0 25.00 23.00"><path d="M2,2 L22.5,21.5 M22.5,2 L2,21.5" stroke="#6a6a6a" stroke-width="3.3" fill="none" stroke-linecap="round"/></svg>
<svg class="b" style="left:366.00px;top:324.00px;" width="28.00" height="24.00" viewBox="0 0 28.00 24.00"><path d="M2,13.5 L10.5,21.5 L26,2.5" stroke="#6a6a6a" stroke-width="4.2" fill="none"/></svg>
<span class="t" style="left:438px;top:320px;font-size:33.00px;color:#6a6a6a;font-weight:700;font-style:italic;font-family:'Liberation Serif', serif;transform:translateX(0.00px) scaleX(0.8743);">f</span>
<span class="t" style="left:448px;top:324px;font-size:27.00px;color:#6a6a6a;font-weight:700;font-style:italic;font-family:'Liberation Serif', serif;transform:translateX(0.86px) scaleX(1.1060);">x</span>
<div class="b" style="left:494.00px;top:314.00px;width:1436.00px;height:44.00px;background:#fff;border:1px solid #d6d6d6;box-sizing:border-box;"></div>
<span class="t" style="left:515px;top:324px;font-size:26.25px;color:#333;transform:translateX(0.50px) scaleX(0.9093);">=VLOOKUP(</span>
<div class="b" style="left:654.00px;top:319.00px;width:1.30px;height:35.00px;background:#222;"></div>
</section>
<main id="sheet">
<div class="b" style="left:0.00px;top:378.00px;width:1920.00px;height:37.00px;background:#e6e6e6;"></div>
<div class="b" style="left:0.00px;top:415.00px;width:52.00px;height:665.00px;background:#e6e6e6;"></div>
<div class="b" style="left:52.00px;top:415.00px;width:1868.00px;height:1.00px;background:#d4d4d4;"></div>
<div class="b" style="left:0.00px;top:415.00px;width:52.00px;height:1.00px;background:#cfcfcf;"></div>
<div class="b" style="left:52.00px;top:453.00px;width:1868.00px;height:1.00px;background:#d4d4d4;"></div>
<div class="b" style="left:0.00px;top:453.00px;width:52.00px;height:1.00px;background:#cfcfcf;"></div>
<div class="b" style="left:52.00px;top:491.00px;width:1868.00px;height:1.00px;background:#d4d4d4;"></div>
<div class="b" style="left:0.00px;top:491.00px;width:52.00px;height:1.00px;background:#cfcfcf;"></div>
<div class="b" style="left:52.00px;top:529.00px;width:1868.00px;height:1.00px;background:#d4d4d4;"></div>
<div class="b" style="left:0.00px;top:529.00px;width:52.00px;height:1.00px;background:#cfcfcf;"></div>
<div class="b" style="left:52.00px;top:567.00px;width:1868.00px;height:1.00px;background:#d4d4d4;"></div>
<div class="b" style="left:0.00px;top:567.00px;width:52.00px;height:1.00px;background:#cfcfcf;"></div>
<div class="b" style="left:52.00px;top:605.00px;width:1868.00px;height:1.00px;background:#d4d4d4;"></div>
<div class="b" style="left:0.00px;top:605.00px;width:52.00px;height:1.00px;background:#cfcfcf;"></div>
<div class="b" style="left:52.00px;top:644.00px;width:1868.00px;height:1.00px;background:#d4d4d4;"></div>
<div class="b" style="left:0.00px;top:644.00px;width:52.00px;height:1.00px;background:#cfcfcf;"></div>
<div class="b" style="left:52.00px;top:690.00px;width:1868.00px;height:1.00px;background:#d4d4d4;"></div>
<div class="b" style="left:0.00px;top:690.00px;width:52.00px;height:1.00px;background:#cfcfcf;"></div>
<div class="b" style="left:52.00px;top:729.00px;width:1868.00px;height:1.00px;background:#d4d4d4;"></div>
<div class="b" style="left:0.00px;top:729.00px;width:52.00px;height:1.00px;background:#cfcfcf;"></div>
<div class="b" style="left:52.00px;top:767.00px;width:1868.00px;height:1.00px;background:#d4d4d4;"></div>
<div class="b" style="left:0.00px;top:767.00px;width:52.00px;height:1.00px;background:#cfcfcf;"></div>
<div class="b" style="left:52.00px;top:805.00px;width:1868.00px;height:1.00px;background:#d4d4d4;"></div>
<div class="b" style="left:0.00px;top:805.00px;width:52.00px;height:1.00px;background:#cfcfcf;"></div>
<div class="b" style="left:52.00px;top:843.00px;width:1868.00px;height:1.00px;background:#d4d4d4;"></div>
<div class="b" style="left:0.00px;top:843.00px;width:52.00px;height:1.00px;background:#cfcfcf;"></div>
<div class="b" style="left:52.00px;top:881.00px;width:1868.00px;height:1.00px;background:#d4d4d4;"></div>
<div class="b" style="left:0.00px;top:881.00px;width:52.00px;height:1.00px;background:#cfcfcf;"></div>
<div class="b" style="left:52.00px;top:919.00px;width:1868.00px;height:1.00px;background:#d4d4d4;"></div>
<div class="b" style="left:0.00px;top:919.00px;width:52.00px;height:1.00px;background:#cfcfcf;"></div>
<div class="b" style="left:52.00px;top:957.00px;width:1868.00px;height:1.00px;background:#d4d4d4;"></div>
<div class="b" style="left:0.00px;top:957.00px;width:52.00px;height:1.00px;background:#cfcfcf;"></div>
<div class="b" style="left:52.00px;top:995.00px;width:1868.00px;height:1.00px;background:#d4d4d4;"></div>
<div class="b" style="left:0.00px;top:995.00px;width:52.00px;height:1.00px;background:#cfcfcf;"></div>
<div class="b" style="left:52.00px;top:1033.00px;width:1868.00px;height:1.00px;background:#d4d4d4;"></div>
<div class="b" style="left:0.00px;top:1033.00px;width:52.00px;height:1.00px;background:#cfcfcf;"></div>
<div class="b" style="left:52.00px;top:1071.00px;width:1868.00px;height:1.00px;background:#d4d4d4;"></div>
<div class="b" style="left:0.00px;top:1071.00px;width:52.00px;height:1.00px;background:#cfcfcf;"></div>
<div class="b" style="left:51.00px;top:416.00px;width:1.00px;height:664.00px;background:#d4d4d4;"></div>
<div class="b" style="left:51.00px;top:380.00px;width:1.00px;height:35.00px;background:#cfcfcf;"></div>
<div class="b" style="left:259.00px;top:416.00px;width:1.00px;height:664.00px;background:#d4d4d4;"></div>
<div class="b" style="left:259.00px;top:380.00px;width:1.00px;height:35.00px;background:#cfcfcf;"></div>
<div class="b" style="left:707.00px;top:416.00px;width:1.00px;height:664.00px;background:#d4d4d4;"></div>
<div class="b" style="left:707.00px;top:380.00px;width:1.00px;height:35.00px;background:#cfcfcf;"></div>
<div class="b" style="left:843.00px;top:416.00px;width:1.00px;height:664.00px;background:#d4d4d4;"></div>
<div class="b" style="left:843.00px;top:380.00px;width:1.00px;height:35.00px;background:#cfcfcf;"></div>
<div class="b" style="left:1038.00px;top:416.00px;width:1.00px;height:664.00px;background:#d4d4d4;"></div>
<div class="b" style="left:1038.00px;top:380.00px;width:1.00px;height:35.00px;background:#cfcfcf;"></div>
<div class="b" style="left:1426.00px;top:416.00px;width:1.00px;height:664.00px;background:#d4d4d4;"></div>
<div class="b" style="left:1426.00px;top:380.00px;width:1.00px;height:35.00px;background:#cfcfcf;"></div>
<div class="b" style="left:1562.00px;top:416.00px;width:1.00px;height:664.00px;background:#d4d4d4;"></div>
<div class="b" style="left:1562.00px;top:380.00px;width:1.00px;height:35.00px;background:#cfcfcf;"></div>
<div class="b" style="left:1698.00px;top:416.00px;width:1.00px;height:664.00px;background:#d4d4d4;"></div>
<div class="b" style="left:1698.00px;top:380.00px;width:1.00px;height:35.00px;background:#cfcfcf;"></div>
<div class="b" style="left:1834.00px;top:416.00px;width:1.00px;height:664.00px;background:#d4d4d4;"></div>
<div class="b" style="left:1834.00px;top:380.00px;width:1.00px;height:35.00px;background:#cfcfcf;"></div>
<div class="b" style="left:51.00px;top:378.00px;width:1.00px;height:702.00px;background:#b0b0b0;"></div>
<div class="b" style="left:0.00px;top:415.00px;width:1920.00px;height:1.00px;background:#adadad;"></div>
<svg class="b" style="left:18.00px;top:382.00px;" width="31.00" height="30.00" viewBox="0 0 31.00 30.00"><polygon points="30.3,1.3 30.3,29.6 0.8,29.6" fill="#b9b9b9"/></svg>
<div class="b" style="left:259.50px;top:378.00px;width:448.50px;height:37.50px;background:#d2d2d2;"></div>
<div class="b" style="left:259.50px;top:412.50px;width:448.50px;height:3.30px;background:#217346;"></div>
<div class="b" style="left:0.00px;top:644.00px;width:52.00px;height:46.00px;background:#d2d2d2;"></div>
<div class="b" style="left:49.00px;top:644.00px;width:3.00px;height:47.00px;background:#24704a;"></div>
<span class="t" style="left:147px;top:387px;font-size:23.25px;color:#0a0a0a;transform:translateX(0.16px) scaleX(1.0927);">A</span>
<span class="t" style="left:475px;top:387px;font-size:23.25px;color:#1f6340;transform:translateX(0.90px) scaleX(1.0526);">B</span>
<span class="t" style="left:1485px;top:387px;font-size:23.25px;color:#0a0a0a;transform:translateX(0.97px) scaleX(1.1183);">F</span>
<span class="t" style="left:1621px;top:387px;font-size:23.25px;color:#0a0a0a;transform:translateX(0.11px) scaleX(1.1489);">G</span>
<span class="t" style="left:1756px;top:387px;font-size:23.25px;color:#0a0a0a;transform:translateX(0.35px) scaleX(1.2447);">H</span>
<span class="t" style="left:1898px;top:387px;font-size:23.25px;color:#0a0a0a;transform:translateX(0.44px) scaleX(1.0333);">I</span>
<span class="t" style="left:16px;top:426px;font-size:24.25px;color:#0a0a0a;transform:translateX(0.00px) scaleX(1.1776);">1</span>
<span class="t" style="left:16px;top:464px;font-size:24.25px;color:#0a0a0a;transform:translateX(0.73px) scaleX(1.1196);">2</span>
<span class="t" style="left:16px;top:502px;font-size:24.25px;color:#0a0a0a;transform:translateX(0.80px) scaleX(1.1086);">3</span>
<span class="t" style="left:17px;top:540px;font-size:24.25px;color:#0a0a0a;transform:translateX(0.61px) scaleX(1.0162);">4</span>
<span class="t" style="left:16px;top:578px;font-size:24.25px;color:#0a0a0a;transform:translateX(0.70px) scaleX(1.1060);">5</span>
<span class="t" style="left:16px;top:616px;font-size:24.25px;color:#0a0a0a;transform:translateX(0.74px) scaleX(1.1098);">6</span>
<span class="t" style="left:16px;top:659px;font-size:24.25px;color:#217346;transform:translateX(0.73px) scaleX(1.1196);">7</span>
<span class="t" style="left:16px;top:701px;font-size:24.25px;color:#0a0a0a;transform:translateX(0.90px) scaleX(1.0892);">8</span>
<span class="t" style="left:16px;top:739px;font-size:24.25px;color:#0a0a0a;transform:translateX(0.73px) scaleX(1.1165);">9</span>
<span class="t" style="left:9px;top:777px;font-size:24.25px;color:#0a0a0a;transform:translateX(0.70px) scaleX(1.1301);">10</span>
<span class="t" style="left:9px;top:815px;font-size:24.25px;color:#0a0a0a;transform:translateX(0.35px) scaleX(1.2429);">11</span>
<span class="t" style="left:9px;top:853px;font-size:24.25px;color:#0a0a0a;transform:translateX(0.61px) scaleX(1.1496);">12</span>
<span class="t" style="left:9px;top:891px;font-size:24.25px;color:#0a0a0a;transform:translateX(0.63px) scaleX(1.1409);">13</span>
<span class="t" style="left:9px;top:929px;font-size:24.25px;color:#0a0a0a;transform:translateX(0.44px) scaleX(1.1361);">14</span>
<span class="t" style="left:9px;top:967px;font-size:24.25px;color:#0a0a0a;transform:translateX(0.65px) scaleX(1.1364);">15</span>
<span class="t" style="left:9px;top:1005px;font-size:24.25px;color:#0a0a0a;transform:translateX(0.64px) scaleX(1.1409);">16</span>
<span class="t" style="left:9px;top:1043px;font-size:24.25px;color:#0a0a0a;transform:translateX(0.61px) scaleX(1.1496);">17</span>
<div class="b" style="left:52.00px;top:416.00px;width:656.00px;height:37.00px;background:#2e8b67;"></div><div class="b" style="left:51.00px;top:453.00px;width:657.00px;height:153.00px;background:#f2f2f2;"></div><div class="b" style="left:51.00px;top:453.00px;width:657.00px;height:1.00px;background:#808080;"></div><div class="b" style="left:51.00px;top:491.00px;width:657.00px;height:1.00px;background:#808080;"></div><div class="b" style="left:51.00px;top:529.00px;width:657.00px;height:1.00px;background:#808080;"></div><div class="b" style="left:51.00px;top:567.00px;width:657.00px;height:1.00px;background:#808080;"></div><div class="b" style="left:51.00px;top:605.00px;width:657.00px;height:1.00px;background:#808080;"></div><div class="b" style="left:51.00px;top:453.00px;width:1.00px;height:153.00px;background:#808080;"></div><div class="b" style="left:259.00px;top:453.00px;width:1.00px;height:153.00px;background:#808080;"></div><div class="b" style="left:707.00px;top:453.00px;width:1.00px;height:153.00px;background:#808080;"></div>
<div class="b" style="left:844.00px;top:416.00px;width:583.00px;height:37.00px;background:#2e8b67;"></div><div class="b" style="left:843.00px;top:453.00px;width:584.00px;height:153.00px;background:#f2f2f2;"></div><div class="b" style="left:843.00px;top:453.00px;width:584.00px;height:1.00px;background:#808080;"></div><div class="b" style="left:843.00px;top:491.00px;width:584.00px;height:1.00px;background:#808080;"></div><div class="b" style="left:843.00px;top:529.00px;width:584.00px;height:1.00px;background:#808080;"></div><div class="b" style="left:843.00px;top:567.00px;width:584.00px;height:1.00px;background:#808080;"></div><div class="b" style="left:843.00px;top:605.00px;width:584.00px;height:1.00px;background:#808080;"></div><div class="b" style="left:843.00px;top:453.00px;width:1.00px;height:153.00px;background:#808080;"></div><div class="b" style="left:1038.00px;top:453.00px;width:1.00px;height:153.00px;background:#808080;"></div><div class="b" style="left:1426.00px;top:453.00px;width:1.00px;height:153.00px;background:#808080;"></div>
<span class="t" style="left:55px;top:425px;font-size:25.25px;color:#fff;font-weight:700;transform:translateX(0.73px) scaleX(0.9939);">Fruit</span>
<span class="t" style="left:602px;top:425px;font-size:25.25px;color:#fff;font-weight:700;transform:translateX(0.78px) scaleX(1.0418);">Amount</span>
<span class="t" style="left:847px;top:425px;font-size:25.25px;color:#fff;font-weight:700;transform:translateX(0.24px) scaleX(1.1133);">Meat</span>
<span class="t" style="left:1321px;top:425px;font-size:25.25px;color:#fff;font-weight:700;transform:translateX(0.82px) scaleX(1.0375);">Amount</span>
<span class="t" style="left:56px;top:462px;font-size:25.75px;color:#000;transform:translateX(0.46px) scaleX(0.9973);">Apples</span>
<span class="t" style="left:672px;top:462px;font-size:25.25px;color:#000;transform:translateX(0.74px) scaleX(1.0785);">50</span>
<span class="t" style="left:55px;top:500px;font-size:25.75px;color:#000;transform:translateX(0.45px) scaleX(0.9902);">Oranges</span>
<span class="t" style="left:672px;top:500px;font-size:25.25px;color:#000;transform:translateX(0.72px) scaleX(1.0788);">20</span>
<span class="t" style="left:54px;top:538px;font-size:25.75px;color:#000;transform:translateX(0.53px) scaleX(0.9910);">Bananas</span>
<span class="t" style="left:672px;top:538px;font-size:25.25px;color:#000;transform:translateX(0.72px) scaleX(1.0788);">60</span>
<span class="t" style="left:54px;top:576px;font-size:25.75px;color:#000;transform:translateX(0.45px) scaleX(1.0028);">Lemons</span>
<span class="t" style="left:673px;top:576px;font-size:25.25px;color:#000;transform:translateX(0.59px) scaleX(1.0500);">40</span>
<span class="t" style="left:847px;top:462px;font-size:25.25px;color:#000;transform:translateX(0.25px) scaleX(1.0189);">Beef</span>
<span class="t" style="left:1391px;top:462px;font-size:25.25px;color:#000;transform:translateX(0.24px) scaleX(1.0773);">50</span>
<span class="t" style="left:848px;top:500px;font-size:25.25px;color:#000;transform:translateX(0.26px) scaleX(1.0011);">Chicken</span>
<span class="t" style="left:1391px;top:500px;font-size:25.25px;color:#000;transform:translateX(0.39px) scaleX(1.0699);">30</span>
<span class="t" style="left:847px;top:538px;font-size:25.25px;color:#000;transform:translateX(0.20px) scaleX(1.0292);">Pork</span>
<span class="t" style="left:1390px;top:538px;font-size:25.25px;color:#000;transform:translateX(0.35px) scaleX(1.1144);">10</span>
<span class="t" style="left:847px;top:576px;font-size:25.25px;color:#000;transform:translateX(0.43px) scaleX(0.9787);">Fish</span>
<span class="t" style="left:1391px;top:576px;font-size:25.25px;color:#000;transform:translateX(0.24px) scaleX(1.0773);">50</span>
<div class="b" style="left:52.00px;top:643.00px;width:207.00px;height:49.00px;background:#f2f2f2;border:3px solid #edb48c;box-sizing:border-box;border-left-color:#fbe3d0;"></div>
<span class="t" style="left:56px;top:658px;font-size:25.75px;color:#000;transform:translateX(0.47px) scaleX(0.9987);">Apples</span>
<div class="b" style="left:842.50px;top:643.00px;width:197.50px;height:49.00px;background:#f2f2f2;border:3px solid #edb48c;box-sizing:border-box;"></div>
<span class="t" style="left:847px;top:657px;font-size:25.25px;color:#000;transform:translateX(0.20px) scaleX(1.0292);">Pork</span>
<div class="b" style="left:1040.00px;top:644.00px;width:387.00px;height:47.00px;background:#ffef00;"></div>
<div class="b" style="left:257.00px;top:642.00px;width:453.00px;height:51.00px;background:#ffef00;border:3px solid #286b3e;box-sizing:border-box;"></div>
<div class="b" style="left:702.00px;top:685.00px;width:10.00px;height:10.00px;background:#fff;"></div>
<div class="b" style="left:703.00px;top:686.00px;width:8.00px;height:8.00px;background:#286b3e;"></div>
<span class="t" style="left:264px;top:657px;font-size:25.25px;color:#000;font-weight:700;transform:translateX(0.17px) scaleX(0.9543);">=VLOOKUP(</span>
<div class="b" style="left:530.00px;top:381.00px;width:766.50px;height:39.50px;background:#fff;border:1px solid #c9c9c9;box-sizing:border-box;box-shadow:1px 2px 3px rgba(0,0,0,0.25);"></div>
<span class="t" style="left:543px;top:388px;font-size:24.25px;color:#555;transform:translateX(0.71px) scaleX(0.8899);">VLOOKUP(</span>
<span class="t" style="left:654px;top:388px;font-size:24.25px;color:#444;font-weight:700;transform:translateX(0.62px) scaleX(0.9748);">lookup_value</span>
<span class="t" style="left:804px;top:388px;font-size:24.25px;color:#555;transform:translateX(0.91px) scaleX(0.9701);">, table_array, col_index_num, [range_lookup])</span>
<div class="b" style="left:55.00px;top:782.00px;width:1042.00px;height:124.00px;background:#237547;"></div>
<span class="t" style="left:97px;top:801px;font-size:84.75px;color:#fff;transform:translateX(0.81px) scaleX(0.9082);">Select</span>
<span class="t" style="left:335px;top:801px;font-size:84.75px;color:#fff;transform:translateX(0.50px) scaleX(0.9932);">the</span>
<span class="t" style="left:475px;top:801px;font-size:84.75px;color:#fff;transform:translateX(0.64px) scaleX(0.9398);">value</span>
<span class="t" style="left:688px;top:801px;font-size:84.75px;color:#fff;transform:translateX(0.36px) scaleX(1.0848);">to</span>
<span class="t" style="left:786px;top:801px;font-size:84.75px;color:#fff;transform:translateX(0.07px) scaleX(1.0145);">look</span>
<span class="t" style="left:965px;top:801px;font-size:84.75px;color:#fff;transform:translateX(0.60px) scaleX(1.0195);">up</span>
<svg class="b" style="left:148.00px;top:656.00px;" width="56.00" height="84.00" viewBox="0 0 56.00 84.00"><polygon points="6.9,10.8 6.9,68.2 20.3,57.0 29.5,76.2 36.4,73.0 27.8,54.0 46.0,53.8" fill="#fff" stroke="#000" stroke-width="3.6" stroke-linejoin="miter"/></svg>
</main>
</body></html>
